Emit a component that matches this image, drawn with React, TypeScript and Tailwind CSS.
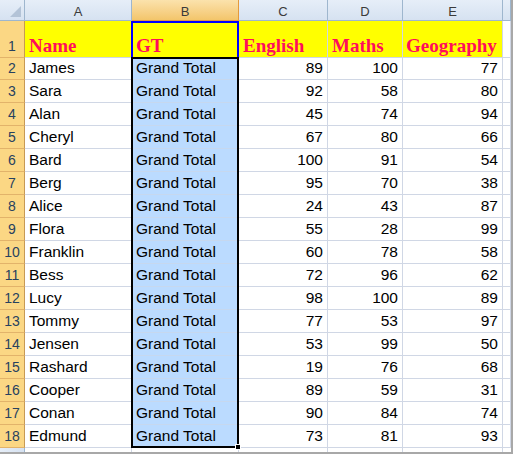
import React from "react";

type Row = { name: string; en: number; ma: number; geo: number };

const ROWS: Row[] = [
  { name: "James", en: 89, ma: 100, geo: 77 },
  { name: "Sara", en: 92, ma: 58, geo: 80 },
  { name: "Alan", en: 45, ma: 74, geo: 94 },
  { name: "Cheryl", en: 67, ma: 80, geo: 66 },
  { name: "Bard", en: 100, ma: 91, geo: 54 },
  { name: "Berg", en: 95, ma: 70, geo: 38 },
  { name: "Alice", en: 24, ma: 43, geo: 87 },
  { name: "Flora", en: 55, ma: 28, geo: 99 },
  { name: "Franklin", en: 60, ma: 78, geo: 58 },
  { name: "Bess", en: 72, ma: 96, geo: 62 },
  { name: "Lucy", en: 98, ma: 100, geo: 89 },
  { name: "Tommy", en: 77, ma: 53, geo: 97 },
  { name: "Jensen", en: 53, ma: 99, geo: 50 },
  { name: "Rashard", en: 19, ma: 76, geo: 68 },
  { name: "Cooper", en: 89, ma: 59, geo: 31 },
  { name: "Conan", en: 90, ma: 84, geo: 74 },
  { name: "Edmund", en: 73, ma: 81, geo: 93 },
];

const grid = "border-r border-b border-[#d0d7e5]";
const colHead =
  "flex items-center justify-center pt-[3px] leading-[16px] border-r border-b border-[#9eb6ce] bg-gradient-to-b from-[#e6eef8] to-[#d6e2f1] text-[13px] text-[#3a3a3a]";
const rowHead =
  "w-[25px] shrink-0 flex items-end justify-center pb-[2px] leading-[17px] border-r border-b border-r-[#c79a55] border-b-[#e2b36a] bg-[#fbd784] text-[14px] text-[#27415f]";
const headText = "font-bold text-[19px] leading-[22px] text-[#ff0d5c] [font-family:'Liberation_Serif',serif]";

function DataRow({ r, n, h }: { r: Row; n: number; h: string }) {
  return (
    <div className={`flex ${h}`}>
      <div className={rowHead}>{n}</div>
      <div className={`w-[107px] shrink-0 flex items-end pl-[4px] pb-[2px] ${grid}`}>{r.name}</div>
      <div className="w-[107px] shrink-0 flex items-end pl-[4px] pb-[2px] bg-[#bbdbff] border-r border-b border-[#c6d8ef]">
        Grand Total
      </div>
      <div className={`w-[89px] shrink-0 flex items-end justify-end pr-[4px] pb-[2px] ${grid}`}>{r.en}</div>
      <div className={`w-[75px] shrink-0 flex items-end justify-end pr-[4px] pb-[2px] ${grid}`}>{r.ma}</div>
      <div className={`w-[100px] shrink-0 flex items-end justify-end pr-[4px] pb-[2px] ${grid}`}>{r.geo}</div>
      <div className={`flex-1 ${grid}`} />
    </div>
  );
}

export default function App() {
  return (
    <div className="w-[514px] h-[457px] bg-white [font-family:'Liberation_Sans',Arial,sans-serif] text-[15.5px] leading-[18px] text-black">
      <div className="relative w-[513px] h-[454px] overflow-hidden border-r-2 border-b-2 border-[#a8a8a8]">
        {/* column headers */}
        <div className="flex h-[21px]">
          <div className="relative w-[25px] shrink-0 border-r border-b border-[#9eb6ce] bg-gradient-to-b from-[#e6eef8] to-[#d6e2f1]">
            <svg className="absolute right-[3px] bottom-[3px]" width="11" height="11" viewBox="0 0 11 11">
              <polygon points="11,0 11,11 0,11" fill="#b3c3d7" />
            </svg>
          </div>
          <div className={`w-[107px] shrink-0 ${colHead}`}>A</div>
          <div className="w-[107px] shrink-0 flex items-center justify-center pt-[3px] leading-[16px] border-r border-b border-[#e49a3c] bg-gradient-to-b from-[#fbe2ac] to-[#f3c56a] text-[13px] text-[#3a3a3a]">
            B
          </div>
          <div className={`w-[89px] shrink-0 ${colHead}`}>C</div>
          <div className={`w-[75px] shrink-0 ${colHead}`}>D</div>
          <div className={`w-[100px] shrink-0 ${colHead}`}>E</div>
          <div className={`flex-1 ${colHead}`} />
        </div>

        {/* row 1 */}
        <div className="flex h-[37px]">
          <div className={rowHead}>1</div>
          <div className={`w-[107px] shrink-0 flex items-end pl-[4px] bg-[#ffff00] ${grid}`}>
            <span className={headText}>Name</span>
          </div>
          <div className={`w-[107px] shrink-0 flex items-end pl-[4px] bg-[#ffff00] ${grid}`}>
            <span className={headText}>GT</span>
          </div>
          <div className={`w-[89px] shrink-0 flex items-end pl-[4px] bg-[#ffff00] ${grid}`}>
            <span className={headText}>English</span>
          </div>
          <div className={`w-[75px] shrink-0 flex items-end pl-[4px] bg-[#ffff00] ${grid}`}>
            <span className={headText}>Maths</span>
          </div>
          <div className={`w-[100px] shrink-0 flex items-end pl-[3px] bg-[#ffff00] ${grid}`}>
            <span className={headText}>Geography</span>
          </div>
          <div className={`flex-1 ${grid}`} />
        </div>

        {ROWS.map((r, i) => (
          <DataRow key={r.name} r={r} n={i + 2} h={i === 0 ? "h-[22px]" : "h-[23px]"} />
        ))}

        {/* row 19, partly visible */}
        <div className="flex h-[23px]">
          <div className="w-[25px] shrink-0 flex justify-center pt-[3px] leading-[17px] border-r border-[#9eb6ce] bg-gradient-to-r from-[#e6eef8] to-[#d6e2f1] text-[14px] text-[#27415f]">
            19
          </div>
          <div className="w-[107px] shrink-0 border-r border-[#d0d7e5]" />
          <div className="w-[107px] shrink-0 border-r border-[#d0d7e5]" />
          <div className="w-[89px] shrink-0 border-r border-[#d0d7e5]" />
          <div className="w-[75px] shrink-0 border-r border-[#d0d7e5]" />
          <div className="w-[100px] shrink-0 border-r border-[#d0d7e5]" />
        </div>

        {/* selection outlines */}
        <div className="absolute left-[131px] top-[21px] w-[108px] h-[37px] border-2 border-b-0 border-[#0000ff]" />
        <div className="absolute left-[131px] top-[57px] w-[108px] h-[391px] border-2 border-black" />
        <div className="absolute left-[235px] top-[444px] w-[6px] h-[6px] bg-black border border-white" />
      </div>
    </div>
  );
}
